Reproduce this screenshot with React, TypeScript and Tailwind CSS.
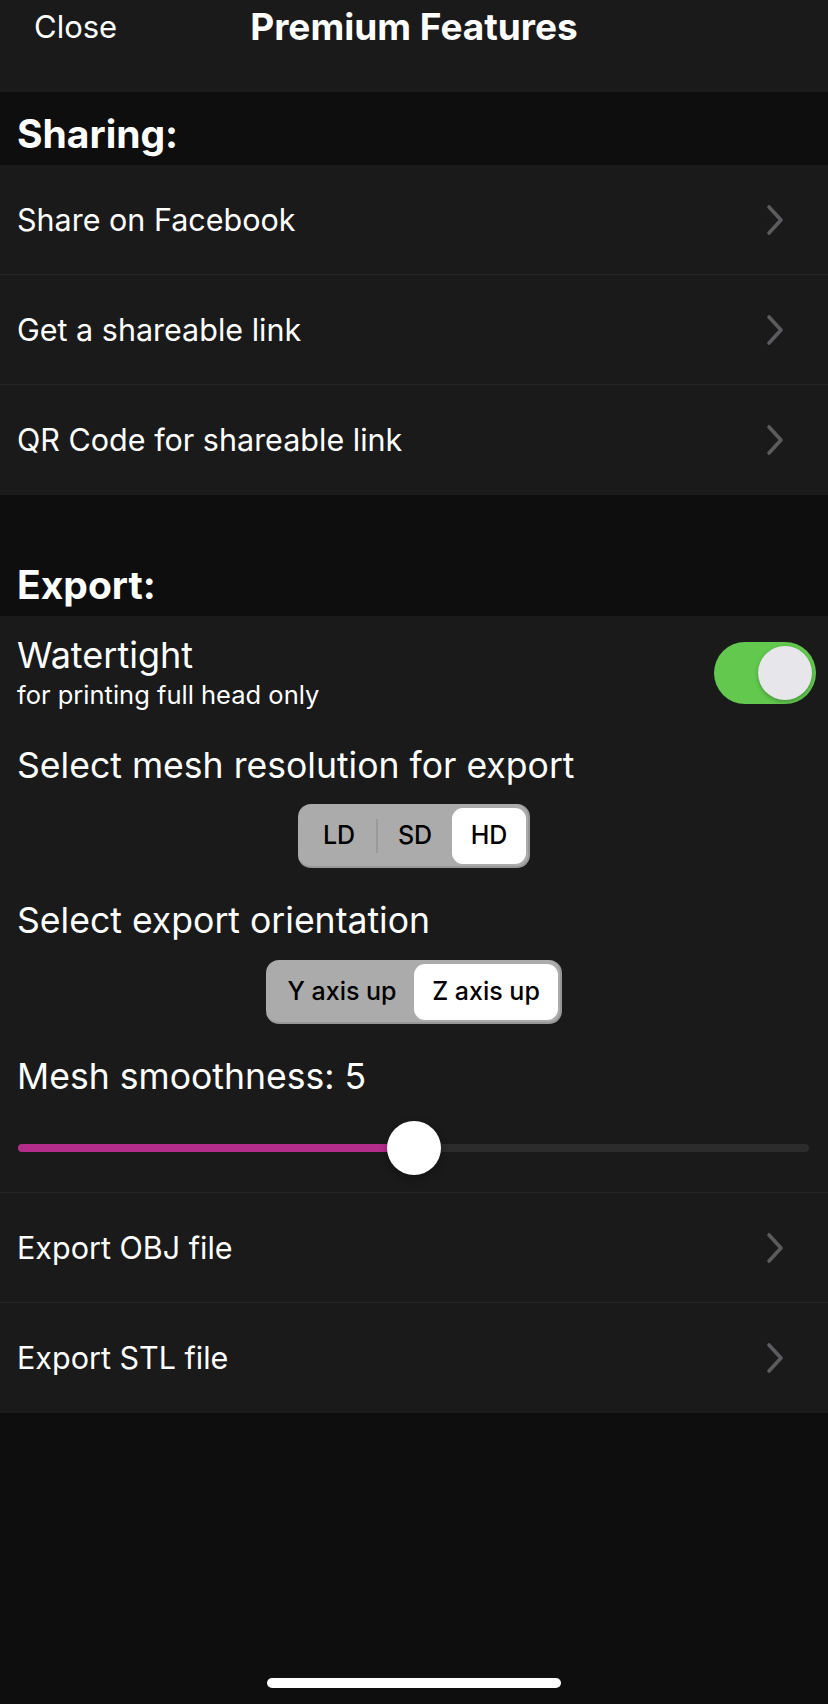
import { useState } from "react";

const font = { fontFamily: "Inter, 'Noto Sans', sans-serif" };

function Chevron() {
  return (
    <svg width="18" height="32" viewBox="0 0 18 32" className="shrink-0">
      <path
        d="M3 3 L15 16 L3 29"
        fill="none"
        stroke="#5c5c5e"
        strokeWidth="3.6"
        strokeLinecap="round"
        strokeLinejoin="round"
      />
    </svg>
  );
}

function NavRow({ label, border = true }: { label: string; border?: boolean }) {
  return (
    <div
      className={`flex h-[110px] items-center justify-between pl-[17px] pr-[44px] ${
        border ? "border-b border-[#252525]" : ""
      }`}
    >
      <span className="text-[30.5px] leading-[40px] text-white">{label}</span>
      <Chevron />
    </div>
  );
}

function Segmented({
  options,
  value,
  onChange,
  segWidth,
}: {
  options: string[];
  value: number;
  onChange: (i: number) => void;
  segWidth: string;
}) {
  return (
    <div className="flex justify-center">
      <div className="flex h-[64px] items-stretch rounded-[13px] border-b-2 border-r-2 border-[#979797] bg-[#ababab] p-[4px] pr-[2px] pb-[2px]">
        {options.map((opt, i) => {
          const selected = i === value;
          const showDivider = i > 0 && i !== value && i - 1 !== value;
          return (
            <div key={opt} className="flex items-center">
              {showDivider && <div className="h-[34px] w-[2px] bg-[#9a9a9a]" />}
              <button
                onClick={() => onChange(i)}
                className={`flex h-full items-center justify-center rounded-[11px] text-[25px] font-medium text-black ${segWidth} ${
                  selected ? "bg-white" : ""
                }`}
              >
                {opt}
              </button>
            </div>
          );
        })}
      </div>
    </div>
  );
}

export default function App() {
  const [watertight, setWatertight] = useState(true);
  const [res, setRes] = useState(2);
  const [axis, setAxis] = useState(1);
  const [smooth] = useState(5);
  const pct = smooth / 10;

  return (
    <div style={font} className="flex min-h-[1704px] w-[828px] flex-col bg-[#0e0e0e] text-white">
      {/* header */}
      <div className="relative h-[92px] bg-[#1a1a1a]">
        <div className="flex items-start px-[34px] pt-[7px]">
          <span className="text-[31px] leading-[40px]">Close</span>
        </div>
        <div className="absolute left-0 right-0 top-[7px] text-center text-[37px] font-bold leading-[40px]">
          Premium Features
        </div>
      </div>

      {/* sharing */}
      <div className="h-[73px] px-[17px] pt-[20px]">
        <span className="text-[39px] font-bold leading-[44px]">Sharing:</span>
      </div>
      <div className="bg-[#1a1a1a]">
        <NavRow label="Share on Facebook" />
        <NavRow label="Get a shareable link" />
        <NavRow label="QR Code for shareable link" border={false} />
      </div>

      {/* export */}
      <div className="h-[121px] px-[17px] pt-[68px]">
        <span className="text-[39px] font-bold leading-[44px]">Export:</span>
      </div>
      <div className="bg-[#1a1a1a]">
        <div className="border-b border-[#252525] pb-[17px] pt-[19px]">
          <div className="flex items-center justify-between pl-[17px] pr-[12px]">
            <div className="flex flex-col">
              <span className="text-[36px] leading-[40px]">Watertight</span>
              <span className="mt-[5px] text-[25.5px] leading-[30px]">for printing full head only</span>
            </div>
            <button
              onClick={() => setWatertight(!watertight)}
              className={`flex h-[62px] w-[102px] items-center rounded-full p-[4px] ${
                watertight ? "justify-end bg-[#62c84e]" : "justify-start bg-[#3a3a3c]"
              }`}
            >
              <span className="h-[54px] w-[54px] rounded-full bg-[#e6e6eb] shadow-[0_2px_4px_rgba(0,0,0,0.25)]" />
            </button>
          </div>

          <div className="mt-[36px] px-[17px] text-[35.6px] leading-[40px]">Select mesh resolution for export</div>
          <div className="mt-[18px]">
            <Segmented options={["LD", "SD", "HD"]} value={res} onChange={setRes} segWidth="w-[74px]" />
          </div>

          <div className="mt-[33px] px-[17px] text-[35.6px] leading-[40px]">Select export orientation</div>
          <div className="mt-[19px]">
            <Segmented options={["Y axis up", "Z axis up"]} value={axis} onChange={setAxis} segWidth="w-[144px]" />
          </div>

          <div className="mt-[33px] px-[17px] text-[35.6px] leading-[40px]">Mesh smoothness: {smooth}</div>
          <div className="mt-[24px] px-[18px] pr-[19px]">
            <div className="relative h-[54px]">
              <div className="absolute left-0 right-0 top-[23px] h-[8px] rounded-full bg-[#2c2c2c]" />
              <div
                className="absolute left-0 top-[23px] h-[8px] rounded-full bg-[#b42d8b]"
                style={{ width: `calc((100% - 54px) * ${pct} + 27px)` }}
              />
              <div
                className="absolute top-0 h-[54px] w-[54px] rounded-full bg-white shadow-[0_3px_8px_rgba(0,0,0,0.3)]"
                style={{ left: `calc((100% - 54px) * ${pct})` }}
              />
            </div>
          </div>
        </div>
        <NavRow label="Export OBJ file" />
        <NavRow label="Export STL file" border={false} />
      </div>

      <div className="flex flex-1 items-end justify-center pb-[16px]">
        <div className="h-[10px] w-[294px] rounded-full bg-white" />
      </div>
    </div>
  );
}
